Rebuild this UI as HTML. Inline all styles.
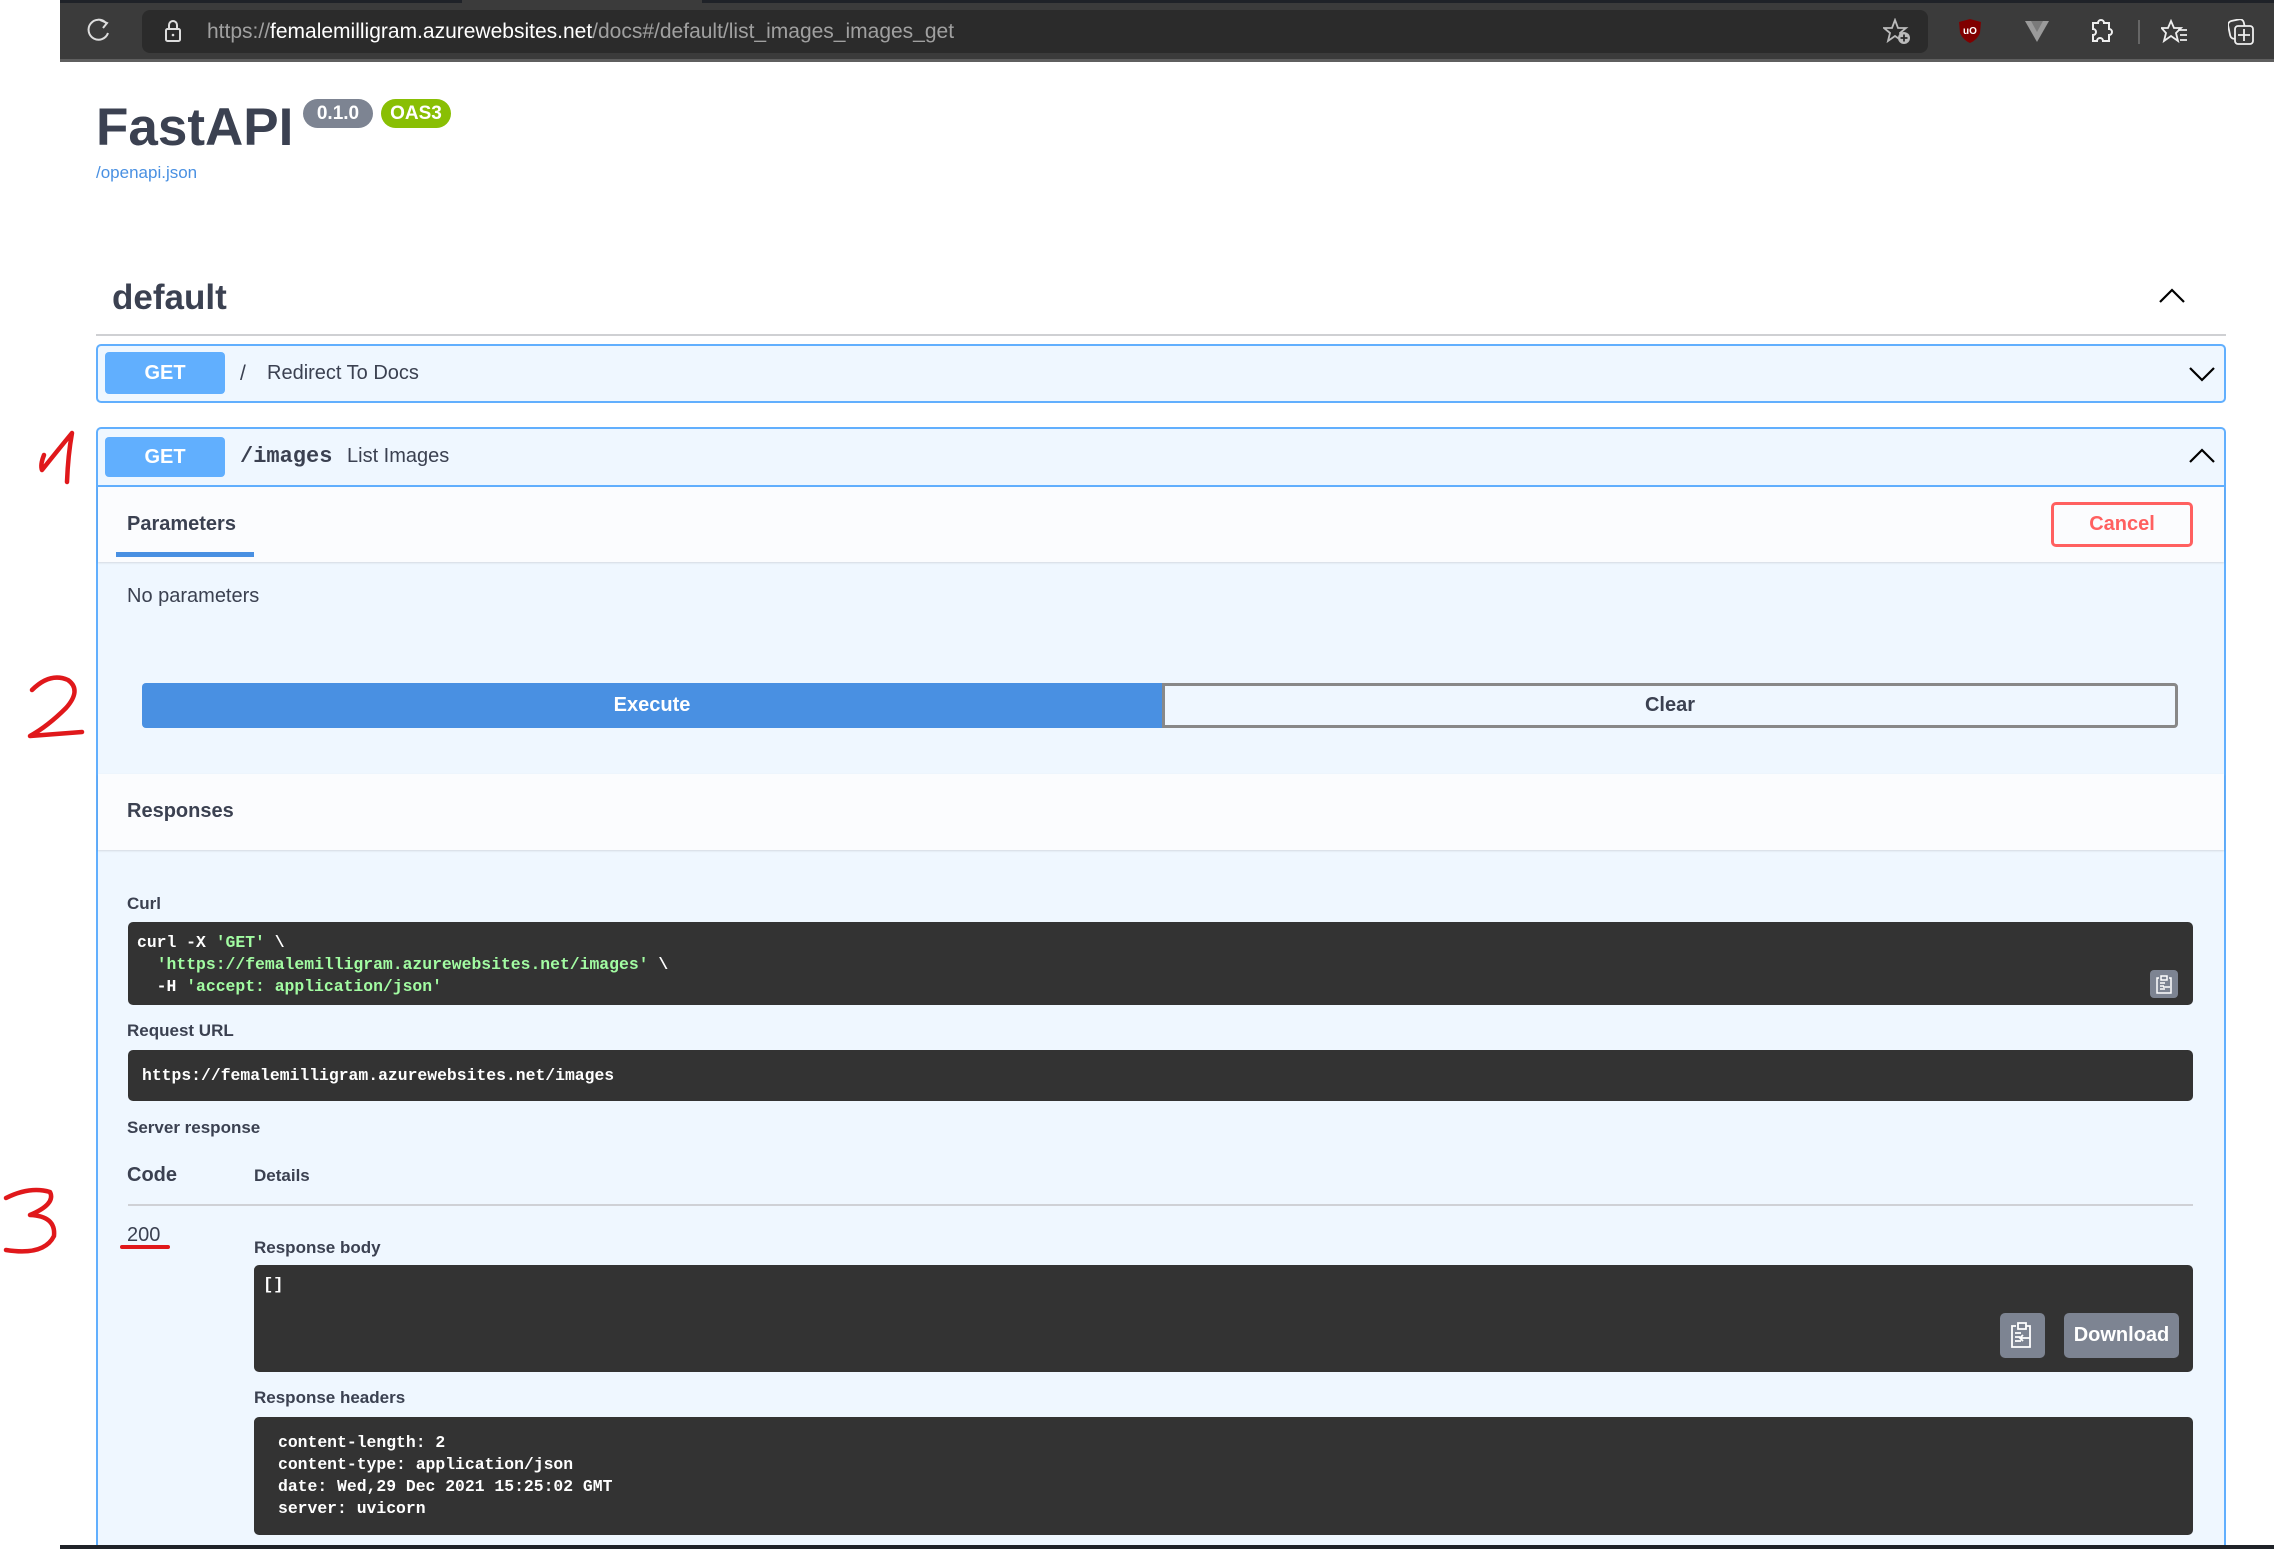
<!DOCTYPE html>
<html><head><meta charset="utf-8"><style>
*{margin:0;padding:0;box-sizing:border-box}
html,body{width:2274px;height:1549px;overflow:hidden}
body{position:relative;background:#fff;font-family:"Liberation Sans",sans-serif;color:#3b4151}
.a{position:absolute}
.t{position:absolute;white-space:nowrap;line-height:1}
.b{font-weight:bold}
.m{font-family:"Liberation Mono",monospace;font-weight:bold}
.dark{position:absolute;background:#333;border-radius:5px}
</style></head><body>
<!-- browser toolbar -->
<div class="a" style="left:60px;top:0;width:2214px;height:61px;background:#3b3b3b"></div>
<div class="a" style="left:60px;top:0;width:2214px;height:3px;background:#1f2228"></div>
<div class="a" style="left:462px;top:0;width:240px;height:3px;background:#3b3b3b"></div>
<div class="a" style="left:60px;top:59px;width:2214px;height:3px;background:#5f5f5f"></div>
<div class="a" style="left:142px;top:10px;width:1786px;height:43px;background:#2b2b2b;border-radius:8px"></div>
<svg class="a" style="left:86px;top:17px" width="26" height="28" viewBox="0 0 26 28"><path d="M20 6 A10 10 0 1 0 22 16" fill="none" stroke="#ddd" stroke-width="2"/><path d="M14 3 L21 6 L17 11" fill="none" stroke="#ddd" stroke-width="2"/></svg>
<svg class="a" style="left:163px;top:19px" width="20" height="24" viewBox="0 0 20 24"><rect x="3" y="10" width="14" height="12" rx="1.5" fill="none" stroke="#ddd" stroke-width="2"/><path d="M6 10V6a4 4 0 0 1 8 0v4" fill="none" stroke="#ddd" stroke-width="2"/><circle cx="10" cy="16" r="1.3" fill="#ddd"/></svg>
<div class="t" style="left:207px;top:21px;font-size:21px;color:#a0a0a0">https://<span style="color:#fff">femalemilligram.azurewebsites.net</span>/docs#/default/list_images_images_get</div>
<svg class="a" style="left:1883px;top:18px" width="30" height="28" viewBox="0 0 30 28"><path d="M12 2 L15 10 L23 10 L17 15 L19 23 L12 18 L5 23 L7 15 L1 10 L9 10 Z" fill="none" stroke="#bbb" stroke-width="1.8"/><circle cx="21" cy="20" r="6" fill="#bbb"/><path d="M21 16.5v7M17.5 20h7" stroke="#2b2b2b" stroke-width="1.8"/></svg>
<svg class="a" style="left:1958px;top:18px" width="24" height="26" viewBox="0 0 24 26"><path d="M12 1 L23 4 L22 15 Q19 22 12 25 Q5 22 2 15 L1 4 Z" fill="#800000"/><text x="12" y="16" font-size="10" font-family="Liberation Sans" font-weight="bold" fill="#fff" text-anchor="middle">uO</text></svg>
<svg class="a" style="left:2024px;top:20px" width="26" height="24" viewBox="0 0 26 24"><path d="M1 1 L25 1 L13 22 Z" fill="#9a9a9a"/><path d="M7 1 L19 1 L13 12 Z" fill="#7a7a7a"/></svg>
<svg class="a" style="left:2090px;top:19px" width="24" height="26" viewBox="0 0 24 26"><path d="M8 4a3 3 0 0 1 6 0h5v6a3 3 0 0 1 0 6v6h-6a3 3 0 0 0-6 0H3v-6a3 3 0 0 0 0-6V4z" fill="none" stroke="#eee" stroke-width="2"/></svg>
<div class="a" style="left:2138px;top:20px;width:2px;height:24px;background:#666"></div>
<svg class="a" style="left:2161px;top:19px" width="28" height="26" viewBox="0 0 28 26"><path d="M10 2 L13 9 L20 9 L15 14 L17 22 L10 17 L3 22 L5 14 L0.5 9 L7 9 Z" fill="none" stroke="#eee" stroke-width="1.8"/><path d="M17 11h9M19 16h7M19 21h7" stroke="#eee" stroke-width="1.8"/></svg>
<svg class="a" style="left:2228px;top:19px" width="28" height="26" viewBox="0 0 28 26"><rect x="1" y="1" width="16" height="18" rx="4" fill="none" stroke="#eee" stroke-width="1.8" transform="rotate(-12 9 10)"/><rect x="7" y="7" width="18" height="18" rx="3" fill="#3b3b3b" stroke="#eee" stroke-width="1.8"/><path d="M16 10v12M10 16h12" stroke="#eee" stroke-width="1.8"/></svg>

<!-- header -->
<div class="t b" style="left:96px;top:101px;font-size:53px">FastAPI</div>
<div class="t b" style="left:303px;top:99px;width:70px;height:29px;border-radius:15px;background:#7d8492;color:#fff;font-size:19px;text-align:center;line-height:29px">0.1.0</div>
<div class="t b" style="left:381px;top:99px;width:70px;height:29px;border-radius:15px;background:#89bf04;color:#fff;font-size:19px;text-align:center;line-height:29px">OAS3</div>
<div class="t" style="left:96px;top:164px;font-size:17px;color:#4990e2">/openapi.json</div>

<div class="t b" style="left:112px;top:280px;font-size:35px">default</div>
<svg class="a" style="left:2158px;top:288px" width="28" height="16" viewBox="0 0 28 16"><path d="M2 14 L14 2 L26 14" fill="none" stroke="#000" stroke-width="2.2"/></svg>
<div class="a" style="left:96px;top:334px;width:2130px;height:2px;background:#cfd0d3"></div>

<!-- op 1 -->
<div class="a" style="left:96px;top:344px;width:2130px;height:59px;background:#eff7ff;border:2px solid #61affe;border-radius:5px"></div>
<div class="t b" style="left:105px;top:352px;width:120px;height:42px;background:#61affe;border-radius:4px;color:#fff;font-size:20px;text-align:center;line-height:42px">GET</div>
<div class="t" style="left:240px;top:363px;font-size:21px">/</div>
<div class="t" style="left:267px;top:363px;font-size:20px">Redirect To Docs</div>
<svg class="a" style="left:2188px;top:366px" width="28" height="16" viewBox="0 0 28 16"><path d="M2 2 L14 14 L26 2" fill="none" stroke="#000" stroke-width="2.2"/></svg>

<!-- op 2 -->
<div class="a" style="left:96px;top:427px;width:2130px;height:1122px;background:#eff7ff;border:2px solid #61affe;border-bottom:none;border-radius:5px 5px 0 0"></div>
<div class="a" style="left:97px;top:485px;width:2128px;height:2px;background:#61affe"></div>
<div class="t b" style="left:105px;top:437px;width:120px;height:40px;background:#61affe;border-radius:4px;color:#fff;font-size:20px;text-align:center;line-height:40px">GET</div>
<div class="t m" style="left:240px;top:446px;font-size:22px">/images</div>
<div class="t" style="left:347px;top:446px;font-size:20px">List Images</div>
<svg class="a" style="left:2188px;top:448px" width="28" height="16" viewBox="0 0 28 16"><path d="M2 14 L14 2 L26 14" fill="none" stroke="#000" stroke-width="2.2"/></svg>

<div class="a" style="left:98px;top:487px;width:2126px;height:75px;background:#fbfcfe;box-shadow:0 1px 2px rgba(0,0,0,.12)"></div>
<div class="t b" style="left:127px;top:514px;font-size:20px">Parameters</div>
<div class="a" style="left:116px;top:552px;width:138px;height:5px;background:#4990e2"></div>
<div class="t b" style="left:2051px;top:502px;width:142px;height:45px;border:3px solid #ff6060;border-radius:5px;color:#ff6060;font-size:20px;text-align:center;line-height:39px">Cancel</div>

<div class="t" style="left:127px;top:586px;font-size:20px">No parameters</div>

<div class="t b" style="left:142px;top:683px;width:1020px;height:45px;background:#4990e2;border-radius:4px 0 0 4px;color:#fff;font-size:20px;text-align:center;line-height:45px">Execute</div>
<div class="t b" style="left:1162px;top:683px;width:1016px;height:45px;border:3px solid #888;border-radius:0 4px 4px 0;color:#3b4151;font-size:20px;text-align:center;line-height:39px">Clear</div>

<div class="a" style="left:98px;top:774px;width:2126px;height:76px;background:#fbfcfe;box-shadow:0 1px 2px rgba(0,0,0,.12)"></div>
<div class="t b" style="left:127px;top:801px;font-size:20px">Responses</div>

<div class="t b" style="left:127px;top:895px;font-size:17px">Curl</div>
<div class="dark" style="left:128px;top:922px;width:2065px;height:83px"></div>
<div class="t m" style="left:137px;top:932px;font-size:16.4px;line-height:22px;color:#fff;white-space:pre">curl -X <span style="color:#a2fca2">'GET'</span> \
  <span style="color:#a2fca2">'https://femalemilligram.azurewebsites.net/images'</span> \
  -H <span style="color:#a2fca2">'accept: application/json'</span></div>
<svg class="a" style="left:2150px;top:970px" width="28" height="28" viewBox="0 0 28 28"><rect x="0" y="0" width="28" height="28" rx="4" fill="#7d8492"/><path d="M9 8h-2v15h14v-15h-2M11 6h6v4h-6z" fill="none" stroke="#fff" stroke-width="1.5"/><path d="M10 13h5M10 16h4M10 19h5M13 17h7" stroke="#fff" stroke-width="1.5"/></svg>

<div class="t b" style="left:127px;top:1022px;font-size:17px">Request URL</div>
<div class="dark" style="left:128px;top:1050px;width:2065px;height:51px"></div>
<div class="t m" style="left:142px;top:1068px;font-size:16.4px;color:#fff">https://femalemilligram.azurewebsites.net/images</div>

<div class="t b" style="left:127px;top:1119px;font-size:17px">Server response</div>
<div class="t b" style="left:127px;top:1165px;font-size:20px">Code</div>
<div class="t b" style="left:254px;top:1167px;font-size:17px">Details</div>
<div class="a" style="left:128px;top:1204px;width:2065px;height:2px;background:#cfd1d6"></div>
<div class="t" style="left:127px;top:1225px;font-size:20px">200</div>
<div class="a" style="left:120px;top:1245px;width:50px;height:4px;background:#e0181b;border-radius:2px"></div>

<div class="t b" style="left:254px;top:1239px;font-size:17px">Response body</div>
<div class="dark" style="left:254px;top:1265px;width:1939px;height:107px"></div>
<div class="t m" style="left:263px;top:1277px;font-size:17px;color:#fff">[]</div>
<div class="a" style="left:2000px;top:1313px;width:45px;height:45px;background:#7d8492;border-radius:5px"></div>
<svg class="a" style="left:2010px;top:1321px" width="24" height="28" viewBox="0 0 24 28"><path d="M6 5h-4v21h18v-21h-4M8 2h8v6h-8z" fill="none" stroke="#fff" stroke-width="1.8"/><path d="M5 12h6M5 16h5M5 20h6M10 17h10M13 14l-3 3 3 3" fill="none" stroke="#fff" stroke-width="1.8"/></svg>
<div class="t b" style="left:2064px;top:1313px;width:115px;height:45px;background:#7d8492;border-radius:5px;color:#fff;font-size:20px;text-align:center;line-height:45px">Download</div>

<div class="t b" style="left:254px;top:1389px;font-size:17px">Response headers</div>
<div class="dark" style="left:254px;top:1417px;width:1939px;height:118px"></div>
<div class="t m" style="left:278px;top:1432px;font-size:16.4px;line-height:22px;color:#fff;white-space:pre">content-length: 2
content-type: application/json
date: Wed,29 Dec 2021 15:25:02 GMT
server: uvicorn</div>

<div class="a" style="left:60px;top:1545px;width:2214px;height:4px;background:#1f2228"></div>

<!-- annotations -->
<svg class="a" style="left:0;top:0" width="100" height="1300" viewBox="0 0 100 1300">
<g fill="none" stroke="#e0181b" stroke-width="4.5" stroke-linecap="round" stroke-linejoin="round">
<path d="M44 455 Q40 465 42 470 Q58 450 72 433 Q68 455 67 482"/>
<path d="M32 690 Q50 672 68 680 Q82 690 66 708 Q48 726 30 736 Q55 734 82 732"/>
<path d="M6 1198 Q30 1186 50 1192 Q56 1204 30 1215 Q56 1216 54 1236 Q44 1256 6 1250"/>
</g></svg>
</body></html>
